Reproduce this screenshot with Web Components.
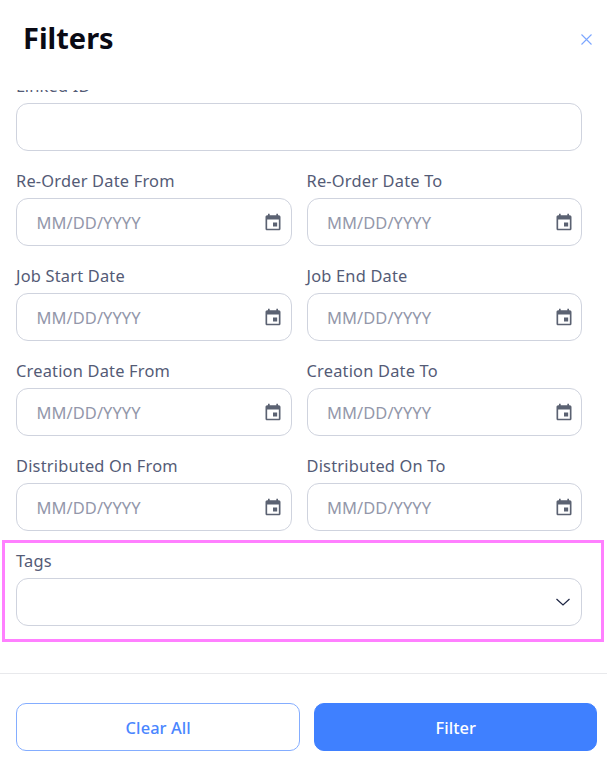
<!DOCTYPE html>
<html>
<head>
<meta charset="utf-8">
<style>
  html, body { margin: 0; padding: 0; background: #fff; }
  body { font-family: "Noto Sans", sans-serif; width: 607px; height: 774px; overflow: hidden; }
</style>
</head>
<body>
<filters-panel>
  <form-field label="Linked ID" class="clipped"><text-box></text-box></form-field>
  <date-row>
    <form-field label="Re-Order Date From"><date-box></date-box></form-field>
    <form-field label="Re-Order Date To"><date-box></date-box></form-field>
  </date-row>
  <date-row>
    <form-field label="Job Start Date"><date-box></date-box></form-field>
    <form-field label="Job End Date"><date-box></date-box></form-field>
  </date-row>
  <date-row>
    <form-field label="Creation Date From"><date-box></date-box></form-field>
    <form-field label="Creation Date To"><date-box></date-box></form-field>
  </date-row>
  <date-row>
    <form-field label="Distributed On From"><date-box></date-box></form-field>
    <form-field label="Distributed On To"><date-box></date-box></form-field>
  </date-row>
  <tag-highlight>
    <form-field label="Tags"><select-box></select-box></form-field>
  </tag-highlight>
</filters-panel>

<script>
class FiltersPanel extends HTMLElement {
  constructor() {
    super();
    const shadow = this.attachShadow({ mode: "open" });
    shadow.innerHTML = `
    <style>
    :host {
      display: flex;
      flex-direction: column;
      width: 607px;
      height: 774px;
      color: #545b76;
    }
    header {
      flex: none;
      height: 90px;
      display: flex;
      justify-content: space-between;
      box-sizing: border-box;
      padding: 18px 14px 0 23px;
    }
    h1 {
      margin: 0;
      font-size: 29px;
      line-height: 40px;
      font-weight: 700;
      color: #0a0a14;
    }
    .close {
      border: none;
      background: none;
      padding: 0;
      width: 13px;
      height: 13px;
      margin-top: 14.5px;
      display: block;
    }
    .close svg { display: block; }
    .scroll {
      flex: none;
      height: 584px;
      overflow: hidden;
      box-sizing: border-box;
      border-bottom: 1px solid #e8e9ec;
    }
    .inner {
      display: flex;
      flex-direction: column;
      gap: 19px;
      margin-top: -15px;
      padding: 0 25px 0 16px;
    }
    footer {
      flex: none;
      display: flex;
      gap: 14px;
      padding: 29px 10px 0 16px;
    }
    button.action {
      flex: 1;
      height: 48px;
      box-sizing: border-box;
      border-radius: 10px;
      font: 500 16.4px "Noto Sans", sans-serif;
      letter-spacing: .1px;
      padding: 0 0 0 1px;
    }
    .clear { background: #fff; border: 1px solid #84adff; color: #4a86ff; }
    .apply { background: #3f80ff; border: 1px solid #3f80ff; color: #fff; }
    </style>
    <header>
      <h1>Filters</h1>
      <button class="close" type="button" aria-label="Close">
        <svg width="13" height="13" viewBox="0 0 13 13"><path d="M1.5 1.5l10 10M11.5 1.5l-10 10" stroke="#7ba6ff" stroke-width="1.1" fill="none"/></svg>
      </button>
    </header>
    <div class="scroll"><div class="inner"><slot></slot></div></div>
    <footer>
      <button class="action clear" type="button">Clear All</button>
      <button class="action apply" type="button">Filter</button>
    </footer>
    `;
  }
}
customElements.define("filters-panel", FiltersPanel);

class FormField extends HTMLElement {
  constructor() {
    super();
    const shadow = this.attachShadow({ mode: "open" });
    shadow.innerHTML = `
    <style>
    :host {
      display: flex;
      flex-direction: column;
      gap: 6px;
      min-width: 0;
    }
    label {
      font-size: 16.4px;
      letter-spacing: .2px;
      line-height: 22px;
      height: 22px;
      color: #545b76;
      white-space: nowrap;
    }
    </style>
    <label></label>
    <slot></slot>
    `;
  }

  connectedCallback() {
    this.shadowRoot.querySelector("label").textContent = this.getAttribute("label");
  }
}
customElements.define("form-field", FormField);

class DateRow extends HTMLElement {
  constructor() {
    super();
    const shadow = this.attachShadow({ mode: "open" });
    shadow.innerHTML = `
    <style>
    :host {
      display: grid;
      grid-template-columns: 1fr 1fr;
      column-gap: 15px;
    }
    </style>
    <slot></slot>
    `;
  }
}
customElements.define("date-row", DateRow);

const boxStyle = `
    :host {
      display: flex;
      align-items: center;
      box-sizing: border-box;
      height: 48px;
      border: 1px solid #cfd3de;
      border-radius: 12px;
      background: #fff;
    }
`;

class TextBox extends HTMLElement {
  constructor() {
    super();
    this.attachShadow({ mode: "open" }).innerHTML = `<style>${boxStyle}</style><slot></slot>`;
  }
}
customElements.define("text-box", TextBox);

class DateBox extends HTMLElement {
  constructor() {
    super();
    this.attachShadow({ mode: "open" }).innerHTML = `
    <style>${boxStyle}
    :host {
      justify-content: space-between;
      padding: 0 7.5px 0 19.5px;
    }
    span {
      font-size: 16.5px;
      letter-spacing: .05px;
      color: #9397aa;
    }
    svg { display: block; }
    </style>
    <span>MM/DD/YYYY</span>
    <svg width="20" height="20" viewBox="0 0 24 24"><path fill="#5b6272" d="M19 4h-1V2h-2v2H8V2H6v2H5c-1.1 0-2 .9-2 2v14c0 1.1.9 2 2 2h14c1.1 0 2-.9 2-2V6c0-1.1-.9-2-2-2zm0 16H5V9h14v11zM12 12.5h5v5h-5z"/></svg>
    `;
  }
}
customElements.define("date-box", DateBox);

class SelectBox extends HTMLElement {
  constructor() {
    super();
    this.attachShadow({ mode: "open" }).innerHTML = `
    <style>${boxStyle}
    :host {
      justify-content: flex-end;
      padding-right: 11px;
    }
    svg { display: block; }
    </style>
    <svg width="14" height="8" viewBox="0 0 14 8"><path d="M.5 1l6.5 6 6.5-6" stroke="#1f2745" stroke-width="1.25" fill="none"/></svg>
    `;
  }
}
customElements.define("select-box", SelectBox);

class TagHighlight extends HTMLElement {
  constructor() {
    super();
    this.attachShadow({ mode: "open" }).innerHTML = `
    <style>
    :host {
      display: block;
      box-sizing: border-box;
      width: 602px;
      height: 102px;
      margin: -10px 0 0 -14.5px;
      padding: 7px 18.5px 0 11.5px;
      border: 3px solid #ff80ff;
    }
    </style>
    <slot></slot>
    `;
  }
}
customElements.define("tag-highlight", TagHighlight);
</script>
</body>
</html>
